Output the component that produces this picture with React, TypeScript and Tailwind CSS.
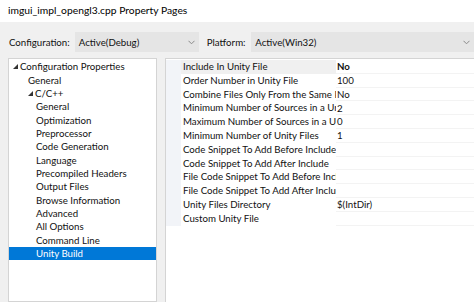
import React from "react";

const treeItems: { label: string; indent: number; expander?: boolean; selected?: boolean }[] = [
  { label: "Configuration Properties", indent: 0, expander: true },
  { label: "General", indent: 1 },
  { label: "C/C++", indent: 1, expander: true },
  { label: "General", indent: 2 },
  { label: "Optimization", indent: 2 },
  { label: "Preprocessor", indent: 2 },
  { label: "Code Generation", indent: 2 },
  { label: "Language", indent: 2 },
  { label: "Precompiled Headers", indent: 2 },
  { label: "Output Files", indent: 2 },
  { label: "Browse Information", indent: 2 },
  { label: "Advanced", indent: 2 },
  { label: "All Options", indent: 2 },
  { label: "Command Line", indent: 2 },
  { label: "Unity Build", indent: 2, selected: true },
];

const props: { name: string; value: string; bold?: boolean }[] = [
  { name: "Include In Unity File", value: "No", bold: true },
  { name: "Order Number in Unity File", value: "100" },
  { name: "Combine Files Only From the Same Precompiled Header", value: "No" },
  { name: "Minimum Number of Sources in a Unity File", value: "2" },
  { name: "Maximum Number of Sources in a Unity File", value: "0" },
  { name: "Minimum Number of Unity Files", value: "1" },
  { name: "Code Snippet To Add Before Include", value: "" },
  { name: "Code Snippet To Add After Include", value: "" },
  { name: "File Code Snippet To Add Before Include", value: "" },
  { name: "File Code Snippet To Add After Include", value: "" },
  { name: "Unity Files Directory", value: "$(IntDir)" },
  { name: "Custom Unity File", value: "" },
];

const indentClass = ["pl-[4px]", "pl-[19px]", "pl-[27px]"];

function Expander() {
  return (
    <svg width="5" height="5" viewBox="0 0 5 5" className="mr-[2px] shrink-0">
      <path d="M5 0 L5 5 L0 5 Z" fill="#333" />
    </svg>
  );
}

function Combo({ text, className }: { text: string; className: string }) {
  return (
    <div className={`flex h-[20px] items-center bg-[#e5e5e5] pl-[4px] ${className}`}>
      <span className="flex-1">{text}</span>
      <svg width="7" height="5" viewBox="0 0 7 5" className="mr-[4px]">
        <path d="M0.5 0.8 L3.5 3.8 L6.5 0.8" fill="none" stroke="#8a8a8a" strokeWidth="1" />
      </svg>
    </div>
  );
}

export default function App() {
  return (
    <div
      className="flex h-[302px] w-[474px] flex-col overflow-hidden bg-[#f0f0f0] text-[9.7px] text-[#111]"
      style={{ fontFamily: '"Segoe UI", Lato, sans-serif' }}
    >
      {/* Title */}
      <div className="flex h-[22px] items-center bg-white pl-[8px] text-[10.3px] text-black">
        imgui_impl_opengl3.cpp Property Pages
      </div>

      {/* Configuration bar */}
      <div className="flex h-[36px] items-center pl-[9px] pt-[4px]">
        <span className="w-[68px]">Configuration:</span>
        <Combo text="Active(Debug)" className="w-[128px]" />
        <span className="ml-[8px] w-[46px]">Platform:</span>
        <Combo text="Active(Win32)" className="w-[230px]" />
      </div>

      {/* Body */}
      <div className="flex flex-1 gap-[8px] pl-[8px]">
        {/* Tree */}
        <div className="w-[149px] border border-[#d4d4d4] bg-white pt-[1px]">
          {treeItems.map((item, i) => (
            <div
              key={i}
              className={`flex h-[13.33px] items-center ${indentClass[item.indent]} ${
                item.selected ? "bg-[#0078d7] text-white" : ""
              }`}
            >
              {item.expander && <Expander />}
              <span>{item.label}</span>
            </div>
          ))}
        </div>

        {/* Property grid */}
        <div className="flex-1 border-l border-t border-[#d4d4d4] bg-white pt-[1px]">
          {props.map((p, i) => (
            <div key={i} className="flex h-[13.8px] items-center">
              <div className="h-full w-[15px] shrink-0 bg-[#f2f4f8]" />
              <div
                className={`h-full w-[155px] shrink-0 overflow-hidden whitespace-nowrap pl-[2px] leading-[13.8px] ${
                  i === 0 ? "bg-[#f0f0f0]" : ""
                }`}
              >
                {p.name}
              </div>
              <div
                className={`flex h-full flex-1 items-center border-b border-[#f3f3f3] pl-[1px] ${
                  p.bold ? "font-bold" : ""
                }`}
              >
                {p.value}
              </div>
            </div>
          ))}
        </div>
      </div>
    </div>
  );
}
